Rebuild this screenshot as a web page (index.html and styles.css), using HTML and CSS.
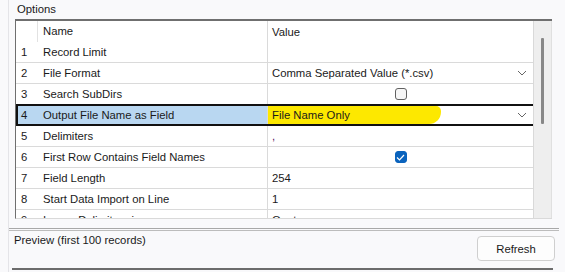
FILE: index.html
```html
<!DOCTYPE html>
<html>
<head>
<meta charset="utf-8">
<link rel="stylesheet" href="styles.css">
</head>
<body>
<div class="page">
  <div class="side"></div>
  <div class="main">
    <div class="opt-label">Options</div>
    <div class="gridbox">
      <div class="grid">
        <div class="row head">
          <div class="num hnum"></div>
          <div class="name">Name</div>
          <div class="val">Value</div>
        </div>
        <div class="row r1">
          <div class="num">1</div>
          <div class="name">Record Limit</div>
          <div class="val"></div>
        </div>
        <div class="row">
          <div class="num">2</div>
          <div class="name">File Format</div>
          <div class="val combo"><span>Comma Separated Value (*.csv)</span><svg class="chev" width="10" height="6" viewBox="0 0 10 6"><path d="M1 1 L5 5 L9 1" fill="none" stroke="#666" stroke-width="1"/></svg></div>
        </div>
        <div class="row">
          <div class="num">3</div>
          <div class="name">Search SubDirs</div>
          <div class="val center"><span class="cb"></span></div>
        </div>
        <div class="row sel">
          <div class="num">4</div>
          <div class="name">Output File Name as Field</div>
          <div class="val combo"><span class="hl">File Name Only</span><svg class="chev" width="10" height="6" viewBox="0 0 10 6"><path d="M1 1 L5 5 L9 1" fill="none" stroke="#666" stroke-width="1"/></svg></div>
        </div>
        <div class="row">
          <div class="num">5</div>
          <div class="name">Delimiters</div>
          <div class="val"><span class="dot">,</span></div>
        </div>
        <div class="row">
          <div class="num">6</div>
          <div class="name">First Row Contains Field Names</div>
          <div class="val center"><span class="cb on"><svg width="9" height="7" viewBox="0 0 9 7"><path d="M1 3.5 L3.5 6 L8 1" fill="none" stroke="#fff" stroke-width="1.2"/></svg></span></div>
        </div>
        <div class="row">
          <div class="num">7</div>
          <div class="name">Field Length</div>
          <div class="val">254</div>
        </div>
        <div class="row">
          <div class="num">8</div>
          <div class="name">Start Data Import on Line</div>
          <div class="val">1</div>
        </div>
        <div class="row">
          <div class="num">9</div>
          <div class="name">Ignore Delimiters in</div>
          <div class="val combo"><span>Quotes</span><svg class="chev" width="10" height="6" viewBox="0 0 10 6"><path d="M1 1 L5 5 L9 1" fill="none" stroke="#666" stroke-width="1"/></svg></div>
        </div>
      </div>
      <div class="scroll"><div class="thumb"></div></div>
    </div>
    <div class="splitter"></div>
    <div class="preview">
      <div class="pv-label">Preview (first 100 records)</div>
      <button class="refresh">Refresh</button>
    </div>
    <div class="pv-grid"></div>
  </div>
</div>
</body>
</html>
```
FILE: styles.css
```css
html, body {
  margin: 0;
  padding: 0;
  background: #f9f9fb;
  font-family: "Liberation Sans", Arial, sans-serif;
  font-size: 11.3px;
  color: #1a1a1a;
  overflow: hidden;
}
.page {
  display: flex;
  width: 565px;
  height: 272px;
}
.side {
  width: 8px;
  flex: none;
}
.main {
  flex: 1;
  border-left: 1px solid #e4e4e8;
  display: flex;
  flex-direction: column;
}
.opt-label {
  height: 19px;
  line-height: 19px;
  padding-left: 8px;
  box-sizing: border-box;
}
.gridbox {
  margin-left: 6px;
  width: 537px;
  height: 200px;
  display: flex;
  border-top: 2px solid #6f6f6f;
  border-left: 1px solid #6f6f6f;
  border-bottom: 1px solid #d9d9d9;
  overflow: hidden;
  box-sizing: border-box;
}
.grid {
  width: 518px;
  flex: none;
  background: #fff;
  border-right: 1px solid #d9d9d9;
  box-sizing: border-box;
  overflow: hidden;
}
.row {
  display: flex;
  height: 21px;
  border-bottom: 1px solid #dadada;
  box-sizing: border-box;
}
.row.head {
  border-bottom: none;
  height: 21px;
}
.num {
  width: 22px;
  flex: none;
  padding-left: 5px;
  box-sizing: border-box;
  line-height: 20px;
}
.hnum {
  border-right: 1px solid #e2e2e2;
}
.name {
  width: 229px;
  flex: none;
  padding-left: 5px;
  box-sizing: border-box;
  line-height: 20px;
  white-space: nowrap;
}
.val {
  flex: 1;
  border-left: 1px solid #dadada;
  padding-left: 4px;
  line-height: 20px;
  white-space: nowrap;
  display: flex;
  align-items: center;
  box-sizing: border-box;
}
.val.combo {
  justify-content: space-between;
  padding-right: 6px;
}
.val.center {
  justify-content: center;
  padding-left: 0;
}
.row.sel {
  border-top: 2px solid #111;
  border-bottom: 2px solid #111;
  margin-top: -1px;
  height: 22px;
}
.row.sel .num, .row.sel .name {
  background: #b9d7f1;
  line-height: 18px;
}
.row.sel .num {
  border-left: 2px solid #111;
  padding-left: 3px;
}
.row.sel .val {
  padding-left: 0;
  line-height: 18px;
}
.hl {
  display: inline-block;
  background: #fde800;
  width: 173px;
  height: 18px;
  padding-left: 4px;
  border-radius: 0 5px 12px 0;
  box-sizing: border-box;
}
.dot {
  color: #5a1060;
}
.cb {
  width: 12px;
  height: 12px;
  border: 1px solid #616161;
  border-radius: 3px;
  background: #f6f6f6;
  box-sizing: border-box;
  display: flex;
  align-items: center;
  justify-content: center;
}
.cb.on {
  background: #0a63bd;
  border-color: #0a63bd;
}
.chev {
  flex: none;
}
.scroll {
  flex: none;
  width: 18px;
  background: #eeeeee;
  border-right: 1px solid #e0e0e0;
  box-sizing: border-box;
  padding-top: 17px;
  padding-left: 7px;
}
.thumb {
  width: 3px;
  height: 86px;
  background: #878787;
  border-radius: 1px;
}
.splitter {
  margin-top: 9px;
  height: 3px;
  width: 550px;
  border-top: 1px solid #a8a8a8;
  border-bottom: 1px solid #bcbcbc;
  box-sizing: border-box;
}
.preview {
  display: flex;
  justify-content: space-between;
  align-items: flex-start;
  height: 37px;
  padding-right: 10px;
}
.pv-label {
  padding-left: 5px;
  line-height: 18px;
}
.refresh {
  margin-top: 5px;
  width: 78px;
  height: 25px;
  border: 1px solid #cfcfcf;
  border-radius: 4px;
  background: #fdfdfd;
  font-family: inherit;
  font-size: 11.3px;
  color: #1a1a1a;
  padding: 0;
}
.pv-grid {
  margin-left: 3px;
  width: 541px;
  height: 4px;
  border-top: 2px solid #6c6c6c;
  box-sizing: border-box;
}
```
